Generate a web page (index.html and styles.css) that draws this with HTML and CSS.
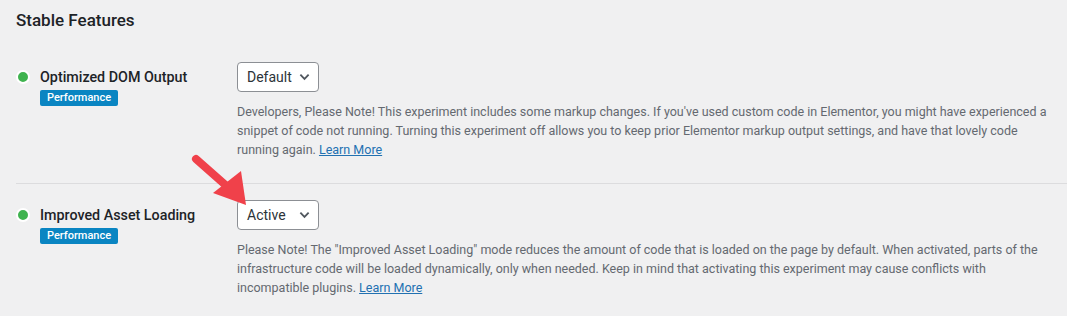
FILE: index.html
```html
<!DOCTYPE html>
<html>
<head>
<meta charset="utf-8">
<link rel="stylesheet" href="styles.css">
</head>
<body>
<div class="page">
  <h2 class="section-title">Stable Features</h2>
  <div class="experiments">
    <div class="row">
      <div class="label-col">
        <div class="label-line"><span class="dot"></span><span class="name">Optimized DOM Output</span></div>
        <span class="tag">Performance</span>
      </div>
      <div class="field-col">
        <div class="select">Default<svg class="chev" viewBox="0 0 12 8" width="11" height="8"><path d="M1.5 1.5 L6 6 L10.5 1.5" fill="none" stroke="#50575e" stroke-width="2"/></svg></div>
        <p class="desc">Developers, Please Note! This experiment includes some markup changes. If you've used custom code in Elementor, you might have experienced a snippet of code not running. Turning this experiment off allows you to keep prior Elementor markup output settings, and have that lovely code running again. <a href="#">Learn More</a></p>
      </div>
    </div>
    <div class="row row-sep">
      <div class="label-col">
        <div class="label-line"><span class="dot"></span><span class="name">Improved Asset Loading</span></div>
        <span class="tag">Performance</span>
      </div>
      <div class="field-col">
        <div class="select">Active<svg class="chev" viewBox="0 0 12 8" width="11" height="8"><path d="M1.5 1.5 L6 6 L10.5 1.5" fill="none" stroke="#50575e" stroke-width="2"/></svg></div>
        <p class="desc">Please Note! The "Improved Asset Loading" mode reduces the amount of code that is loaded on the page by default. When activated, parts of the infrastructure code will be loaded dynamically, only when needed. Keep in mind that activating this experiment may cause conflicts with incompatible plugins. <a href="#">Learn More</a></p>
      </div>
    </div>
  </div>
  <svg class="arrow" width="70" height="70" viewBox="0 0 70 70">
    <line x1="8" y1="7" x2="42" y2="37" stroke="#f0414a" stroke-width="8" stroke-linecap="round"/>
    <polygon points="53,19 25,41 58,53" fill="#f0414a"/>
  </svg>
</div>
</body>
</html>
```
FILE: styles.css
```css
html, body {
  margin: 0;
  padding: 0;
  background: #f0f0f1;
}
body {
  font-family: Roboto, "Liberation Sans", sans-serif;
  color: #1d2327;
  font-size: 13px;
}
.page {
  position: relative;
  width: 1067px;
  height: 316px;
  overflow: hidden;
  padding-left: 16px;
  box-sizing: border-box;
}
.section-title {
  margin: 0;
  padding-top: 8px;
  font-size: 17px;
  font-weight: 500;
  line-height: 24px;
  color: #1d2327;
}
.experiments {
  margin-top: 30px;
}
.row {
  display: flex;
}
.row-sep {
  border-top: 1px solid #dcdcde;
  margin-top: 24px;
  padding-top: 16px;
}
.label-col {
  width: 221px;
  flex-shrink: 0;
  display: flex;
  flex-direction: column;
  align-items: flex-start;
}
.label-line {
  display: flex;
  align-items: center;
  height: 29px;
}
.dot {
  width: 10px;
  height: 10px;
  border-radius: 50%;
  background: #3fb34f;
  border: 2px solid #fff;
  margin-right: 10px;
}
.name {
  font-size: 14.3px;
  font-weight: 500;
  color: #1d2327;
}
.tag {
  margin-left: 24px;
  margin-top: -1px;
  background: #0a85c2;
  color: #fff;
  font-size: 11px;
  font-weight: 500;
  line-height: 16px;
  height: 16px;
  padding: 0 7px;
  border-radius: 2px;
}
.field-col {
  flex: 1;
  padding-right: 8px;
}
.select {
  box-sizing: border-box;
  width: 82px;
  height: 30px;
  background: #fff;
  border: 1px solid #8c8f94;
  border-radius: 4px;
  display: flex;
  align-items: center;
  justify-content: space-between;
  padding: 0 8px 0 9px;
  font-size: 14px;
  color: #2c3338;
}
.chev {
  display: block;
}
.desc {
  margin: 10px 0 0;
  font-size: 12.5px;
  line-height: 19px;
  color: #646970;
}
.desc a {
  color: #2271b1;
  text-decoration: underline;
}
.arrow {
  position: absolute;
  left: 188px;
  top: 152px;
}
```
